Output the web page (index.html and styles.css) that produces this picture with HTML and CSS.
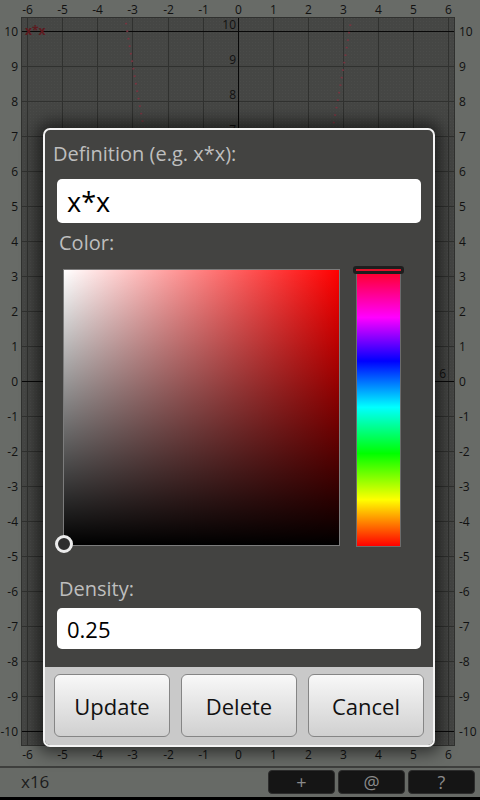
FILE: index.html
```html
<!DOCTYPE html>
<html>
<head>
<meta charset="utf-8">
<link rel="stylesheet" href="styles.css">
</head>
<body>
<div class="screen">
  <div class="graph">
    <svg class="plot" width="480" height="766" viewBox="0 0 480 766">
      <defs>
        <pattern id="dots" width="3" height="3" patternUnits="userSpaceOnUse">
          <rect width="3" height="3" fill="#454644"/>
          <rect width="1" height="1" fill="#4a4b49"/>
        </pattern>
        <clipPath id="plotclip"><rect x="21" y="20" width="434" height="726"/></clipPath>
      </defs>
      <rect x="21.5" y="17.5" width="433" height="728" fill="url(#dots)" stroke="#30312f"/>
      <g class="grid">
        <line x1="27.5" y1="18" x2="27.5" y2="745"/>
        <line x1="62.5" y1="18" x2="62.5" y2="745"/>
        <line x1="97.5" y1="18" x2="97.5" y2="745"/>
        <line x1="132.5" y1="18" x2="132.5" y2="745"/>
        <line x1="168.5" y1="18" x2="168.5" y2="745"/>
        <line x1="203.5" y1="18" x2="203.5" y2="745"/>
        <line x1="273.5" y1="18" x2="273.5" y2="745"/>
        <line x1="308.5" y1="18" x2="308.5" y2="745"/>
        <line x1="343.5" y1="18" x2="343.5" y2="745"/>
        <line x1="378.5" y1="18" x2="378.5" y2="745"/>
        <line x1="413.5" y1="18" x2="413.5" y2="745"/>
        <line x1="448.5" y1="18" x2="448.5" y2="745"/>
        <line x1="22" y1="66.5" x2="454" y2="66.5"/>
        <line x1="22" y1="101.5" x2="454" y2="101.5"/>
        <line x1="22" y1="136.5" x2="454" y2="136.5"/>
        <line x1="22" y1="171.5" x2="454" y2="171.5"/>
        <line x1="22" y1="206.5" x2="454" y2="206.5"/>
        <line x1="22" y1="241.5" x2="454" y2="241.5"/>
        <line x1="22" y1="276.5" x2="454" y2="276.5"/>
        <line x1="22" y1="311.5" x2="454" y2="311.5"/>
        <line x1="22" y1="346.5" x2="454" y2="346.5"/>
        <line x1="22" y1="416.5" x2="454" y2="416.5"/>
        <line x1="22" y1="451.5" x2="454" y2="451.5"/>
        <line x1="22" y1="486.5" x2="454" y2="486.5"/>
        <line x1="22" y1="521.5" x2="454" y2="521.5"/>
        <line x1="22" y1="556.5" x2="454" y2="556.5"/>
        <line x1="22" y1="591.5" x2="454" y2="591.5"/>
        <line x1="22" y1="626.5" x2="454" y2="626.5"/>
        <line x1="22" y1="661.5" x2="454" y2="661.5"/>
        <line x1="22" y1="696.5" x2="454" y2="696.5"/>
      </g>
      <g class="axes">
        <line x1="22" y1="31.5" x2="454" y2="31.5"/>
        <line x1="22" y1="731.5" x2="454" y2="731.5"/>
        <line x1="22" y1="381.5" x2="454" y2="381.5"/>
        <line x1="238.5" y1="18" x2="238.5" y2="745"/>
      </g>
      <polyline class="curve" clip-path="url(#plotclip)" points="122.5,0.35 126,23.1 129.5,45.15 133,66.5 136.5,87.15 140,107.1 143.5,126.35 147.04,144.9 150.55,162.75 154.06,179.9 157.57,196.35 161.08,212.1 164.59,227.15 168.1,241.5 175.12,268.1 182.14,291.9 189.16,312.9 196.18,331.1 203.2,346.5 210.22,359.1 217.24,368.9 224.26,375.9 231.28,380.1 238.3,381.5 245.32,380.1 252.34,375.9 259.36,368.9 266.38,359.1 273.4,346.5 280.42,331.1 287.44,312.9 294.46,291.9 301.48,268.1 308.5,241.5 312.01,227.15 315.52,212.1 319.03,196.35 322.54,179.9 326.05,162.75 329.56,144.9 333.1,126.35 336.6,107.1 340.1,87.15 343.6,66.5 347.1,45.15 350.6,23.1 354.1,0.35"/>
      <text class="fn" x="25" y="35">x*x</text>
      <g class="lbl top">
        <text x="27.5" y="14">-6</text><text x="62.5" y="14">-5</text><text x="97.5" y="14">-4</text>
        <text x="132.5" y="14">-3</text><text x="168.5" y="14">-2</text><text x="203.5" y="14">-1</text>
        <text x="238.5" y="14">0</text><text x="273.5" y="14">1</text><text x="308.5" y="14">2</text>
        <text x="343.5" y="14">3</text><text x="378.5" y="14">4</text><text x="413.5" y="14">5</text>
        <text x="448.5" y="14">6</text>
      </g>
      <g class="lbl top">
        <text x="27.5" y="759">-6</text><text x="62.5" y="759">-5</text><text x="97.5" y="759">-4</text>
        <text x="132.5" y="759">-3</text><text x="168.5" y="759">-2</text><text x="203.5" y="759">-1</text>
        <text x="238.5" y="759">0</text><text x="273.5" y="759">1</text><text x="308.5" y="759">2</text>
        <text x="343.5" y="759">3</text><text x="378.5" y="759">4</text><text x="413.5" y="759">5</text>
        <text x="448.5" y="759">6</text>
      </g>
      <g class="lbl left">
        <text x="18" y="35.5">10</text><text x="18" y="70.5">9</text><text x="18" y="105.5">8</text>
        <text x="18" y="140.5">7</text><text x="18" y="175.5">6</text><text x="18" y="210.5">5</text>
        <text x="18" y="245.5">4</text><text x="18" y="280.5">3</text><text x="18" y="315.5">2</text>
        <text x="18" y="350.5">1</text><text x="18" y="385.5">0</text><text x="18" y="420.5">-1</text>
        <text x="18" y="455.5">-2</text><text x="18" y="490.5">-3</text><text x="18" y="525.5">-4</text>
        <text x="18" y="560.5">-5</text><text x="18" y="595.5">-6</text><text x="18" y="630.5">-7</text>
        <text x="18" y="665.5">-8</text><text x="18" y="700.5">-9</text><text x="18" y="735.5">-10</text>
      </g>
      <g class="lbl right">
        <text x="459" y="35.5">10</text><text x="459" y="70.5">9</text><text x="459" y="105.5">8</text>
        <text x="459" y="140.5">7</text><text x="459" y="175.5">6</text><text x="459" y="210.5">5</text>
        <text x="459" y="245.5">4</text><text x="459" y="280.5">3</text><text x="459" y="315.5">2</text>
        <text x="459" y="350.5">1</text><text x="459" y="385.5">0</text><text x="459" y="420.5">-1</text>
        <text x="459" y="455.5">-2</text><text x="459" y="490.5">-3</text><text x="459" y="525.5">-4</text>
        <text x="459" y="560.5">-5</text><text x="459" y="595.5">-6</text><text x="459" y="630.5">-7</text>
        <text x="459" y="665.5">-8</text><text x="459" y="700.5">-9</text><text x="459" y="735.5">-10</text>
      </g>
      <g class="lbl left">
        <text x="236" y="29">10</text><text x="236" y="64">9</text><text x="236" y="99">8</text>
        <text x="236" y="134">7</text>
        <text x="446" y="378">6</text>
      </g>
    </svg>
  </div>
  <div class="bar">
    <span class="zoom">x16</span>
    <div class="tools">
      <button class="tool">+</button>
      <button class="tool">@</button>
      <button class="tool">?</button>
    </div>
  </div>
</div>

<div class="dialog">
  <div class="dialog-body">
    <div class="label">Definition (e.g. x*x):</div>
    <div class="field def">x*x</div>
    <div class="label sub color">Color:</div>
    <div class="picker-row">
      <div class="sv"><span class="sv-marker"></span></div>
      <div class="hue"><span class="hue-marker"></span></div>
    </div>
    <div class="label sub density">Density:</div>
    <div class="field dens">0.25</div>
  </div>
  <div class="dialog-buttons">
    <button class="btn">Update</button>
    <button class="btn">Delete</button>
    <button class="btn">Cancel</button>
  </div>
</div>
</body>
</html>
```

FILE: styles.css
```css
* { box-sizing: border-box; }
html, body {
  margin: 0;
  padding: 0;
  width: 480px;
  height: 800px;
  overflow: hidden;
}
body {
  position: relative;
  font-family: "Open Sans", "DejaVu Sans", sans-serif;
  background: #686b67;
}
.screen {
  width: 480px;
  height: 800px;
  display: flex;
  flex-direction: column;
  background: #686b67;
}
.graph {
  height: 766px;
}
.plot {
  display: block;
}
.grid line {
  stroke: #30312f;
  stroke-width: 1;
}
.axes line {
  stroke: #080808;
  stroke-width: 1;
}
.curve {
  fill: none;
  stroke: #7a3440;
  stroke-width: 2;
  stroke-dasharray: 1.6 6;
}
.fn {
  font-family: "Open Sans", sans-serif;
  font-size: 12px;
  font-weight: 700;
  fill: #5e1a1f;
}
.lbl text {
  font-family: "Open Sans", sans-serif;
  font-size: 12px;
  fill: #111;
}
.lbl.top text { text-anchor: middle; }
.lbl.left text { text-anchor: end; }
.lbl.right text { text-anchor: start; }

.bar {
  height: 34px;
  border-top: 2px solid #3e3f3d;
  border-bottom: 3px solid #000;
  background: #676a66;
  display: flex;
  align-items: center;
  justify-content: space-between;
  padding: 0 5px 0 21px;
}
.zoom {
  font-size: 17px;
  color: #1c1c1c;
  margin-top: -2px;
}
.tools {
  display: flex;
  gap: 3px;
  margin-top: -2px;
}
.tool {
  width: 67px;
  height: 24px;
  margin: 0;
  padding: 0;
  border: 1px solid #2c2c2c;
  border-radius: 4px;
  background: #151515;
  color: #8a8a8a;
  font-family: "Open Sans", sans-serif;
  font-size: 18px;
  line-height: 22px;
}

.dialog {
  position: absolute;
  left: 43px;
  top: 128px;
  width: 392px;
  height: 619px;
  border: 2px solid #f4f4f4;
  border-radius: 7px;
  background: #434341;
  box-shadow: 0 0 16px 6px rgba(0, 0, 0, 0.55);
  display: flex;
  flex-direction: column;
  overflow: hidden;
}
.dialog-body {
  flex: 1;
  padding: 12px 12px 0 8px;
  display: flex;
  flex-direction: column;
}
.label {
  font-size: 20px;
  line-height: 24px;
  color: #bebebe;
}
.label.sub { padding-left: 6px; }
.label.color { margin-top: 8px; }
.label.density { margin-top: 30px; }
.field {
  margin-left: 4px;
  background: #fff;
  border-radius: 5px;
  padding-left: 10px;
  display: flex;
  align-items: center;
  color: #000;
}
.field.def {
  margin-top: 13px;
  height: 44px;
  font-size: 27px;
}
.field.dens {
  margin-top: 7px;
  height: 41px;
  font-size: 22px;
}
.picker-row {
  margin-top: 14px;
  margin-left: 10px;
  display: flex;
  align-items: flex-start;
  gap: 16px;
}
.sv {
  position: relative;
  width: 277px;
  height: 277px;
  border: 1px solid #7c7c7c;
  background:
    linear-gradient(to top, #000, rgba(0, 0, 0, 0)),
    linear-gradient(to right, #fff, #f00);
}
.sv-marker {
  position: absolute;
  left: -9px;
  bottom: -8px;
  width: 18px;
  height: 18px;
  border-radius: 50%;
  border: 3px solid #ececec;
  background: #2e2e2e;
}
.hue {
  position: relative;
  width: 45px;
  height: 274px;
  margin-top: 4px;
  border: 1px solid #6c6c6c;
  background: linear-gradient(to bottom,
    #ff0033 0%, #ff00ff 16%, #0000ff 32%, #00ffff 49%,
    #00ff00 66%, #ffff00 83%, #ff0000 100%);
}
.hue-marker {
  position: absolute;
  left: -4px;
  right: -4px;
  top: -8px;
  height: 8px;
  border: 3px solid #1e1e1e;
  border-radius: 3px;
  background: #e0122a;
}
.dialog-buttons {
  height: 78px;
  background: #c9c9c9;
  padding: 7px 9px 0;
  display: flex;
  gap: 11px;
}
.btn {
  width: 117px;
  height: 63px;
  margin: 0;
  padding: 0;
  border: 1px solid #858585;
  border-radius: 6px;
  background: linear-gradient(#f8f8f8, #e2e2e2 55%, #d0d0d0);
  color: #111;
  font-family: "Open Sans", sans-serif;
  font-size: 22px;
}
```
